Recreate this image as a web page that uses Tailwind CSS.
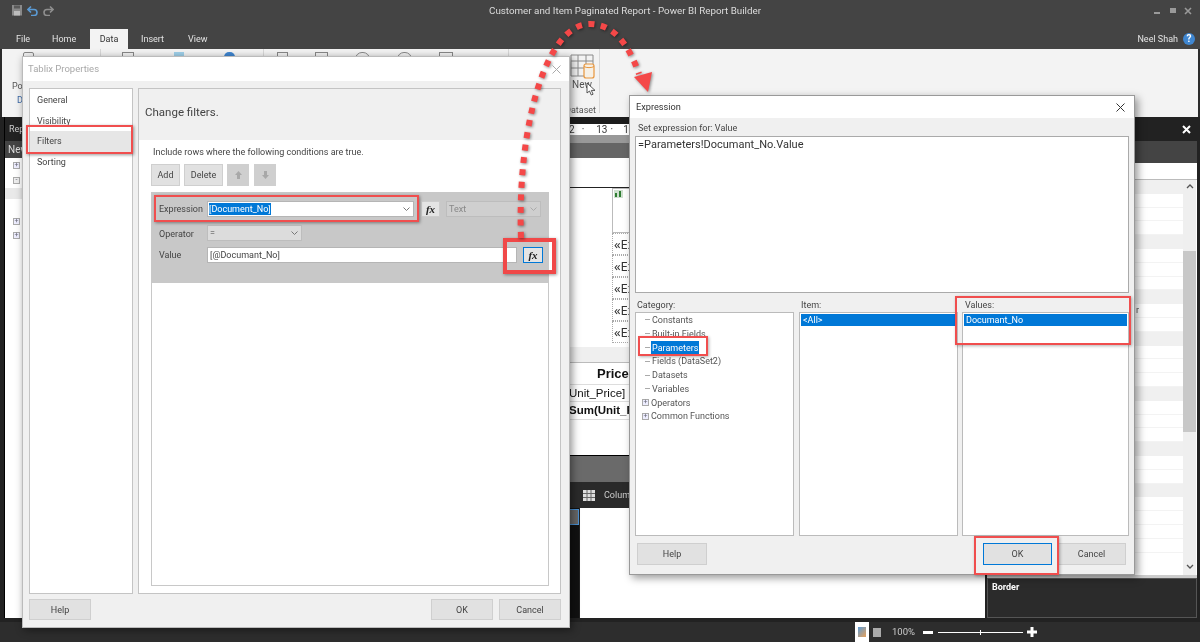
<!DOCTYPE html>
<html>
<head>
<meta charset="utf-8">
<script src="https://cdn.jsdelivr.net/npm/@tailwindcss/browser@4"></script>
</head>
<body class="bg-[#2b2b2b]">
<div class="relative w-[1200px] h-[642px] overflow-hidden flex flex-col bg-[#2b2b2b] font-['Roboto',sans-serif] text-[9px] leading-[14px] text-[#444] blur-[0.35px]">

  <!-- title bar -->
  <div class="h-[49px] shrink-0 bg-[#444444] flex flex-col text-[#e4e4e4]">
    <div class="h-[29px] flex items-start relative">
      <div class="flex items-center gap-[5px] pl-[12px] pt-[5px]">
        <svg width="10" height="11" viewBox="0 0 10 11"><rect width="10" height="10.5" fill="#8a8a8a"/><rect x="2" y="0.5" width="6" height="3" fill="#5a5a5a"/><rect x="2" y="6" width="6" height="4.5" fill="#bdbdbd"/></svg>
        <svg width="11" height="11" viewBox="0 0 11 11" fill="none" stroke="#5b9bd5" stroke-width="1.6"><path d="M1 4.5h6a3 3 0 0 1 0 6H4"/><path d="M4 1.5L1 4.5l3 3"/></svg>
        <svg width="11" height="11" viewBox="0 0 11 11" fill="none" stroke="#8f8f8f" stroke-width="1.6"><path d="M10 4.5H4a3 3 0 0 0 0 6h3"/><path d="M7 1.5l3 3-3 3"/></svg>
      </div>
      <div class="absolute left-[489px] top-[4px] text-[9.800px] text-[#dcdcdc] whitespace-nowrap">Customer and Item Paginated Report - Power BI Report Builder</div>
      <div class="ml-auto flex items-center gap-[8px] pr-[8px] pt-[7px]">
        <svg width="7" height="8" viewBox="0 0 7 8"><rect y="5" width="6" height="2" fill="#9a9a9a"/></svg>
        <svg width="7" height="8" viewBox="0 0 7 8"><rect x="1" y="1" width="6" height="5" fill="#9a9a9a"/></svg>
        <svg width="8" height="8" viewBox="0 0 8 8" stroke="#9a9a9a" stroke-width="1.6"><path d="M1 1l6 6M7 1L1 7"/></svg>
      </div>
    </div>
    <div class="h-[20px] flex items-center">
      <span class="ml-[16px] w-[36px]">File</span>
      <span class="w-[38px]">Home</span>
      <span class="w-[38px] h-[20px] bg-[#f3f3f3] text-[#333] flex items-center justify-center">Data</span>
      <span class="ml-[13px] w-[47px]">Insert</span>
      <span>View</span>
      <span class="ml-auto mr-[5px] flex items-center gap-[5px]">Neel Shah
        <span class="w-[12px] h-[12px] rounded-full bg-[#3f86d0] text-white text-[10px] leading-[12px] font-bold text-center">?</span>
      </span>
    </div>
  </div>

  <!-- ribbon -->
  <div class="h-[68px] shrink-0 mx-[2px] bg-[#f3f3f3] flex relative overflow-hidden">
    <div class="w-[99px] border-r border-[#d8d8d8] text-[#555] pt-[30px] pl-[10px]">Po<br><span class="pl-[5px] text-[#3c6aa8]">D</span>
      <span class="absolute left-[21px] top-[3px] w-[11px] h-[8px] border border-[#888] rounded-t-[2px]"></span>
    </div>
    <div class="w-[163px] border-r border-[#d8d8d8] h-[60px] flex gap-[40px] pl-[21px] pt-[3px]">
      <span class="w-[12px] h-[8px] border border-[#888]"></span>
      <span class="w-[10px] h-[6px] bg-[#9fd0ea]"></span>
      <span class="w-[11px] h-[6px] bg-[#3f86d0] rounded-t-[5px]"></span>
    </div>
    <div class="w-[245px] border-r border-[#d8d8d8] h-[60px] flex gap-[27px] pl-[13px] pt-[3px]">
      <span class="w-[11px] h-[8px] border border-[#888]"></span>
      <span class="w-[13px] h-[8px] border border-[#888]"></span>
      <span class="w-[15px] h-[8px] border border-[#888] rounded-t-[7px]"></span>
      <span class="w-[15px] h-[8px] border border-[#888] rounded-t-[7px]"></span>
      <span class="w-[14px] h-[8px] border border-[#888]"></span>
    </div>
    <div class="w-[91px] border-r border-[#d8d8d8] h-[64px] relative text-[#555]">
      <svg class="absolute left-[61px] top-[5px]" width="26" height="26" viewBox="0 0 26 26" fill="none"><path d="M1 1h22v21H1zM1 7h22M1 14h22M8 1v21M16 1v21" stroke="#8a8a8a" stroke-width="1"/><rect x="14" y="10" width="10" height="14" rx="2" fill="#f6f0e6" stroke="#e8963c" stroke-width="1.2"/><path d="M14 12.5c2 1.5 8 1.5 10 0" stroke="#e8963c"/></svg>
      <span class="absolute left-[63px] top-[29px] text-[10px]">New</span>
      <span class="absolute left-[56px] top-[54px]">Dataset</span>
      <svg class="absolute left-[77px] top-[33px]" width="10" height="14" viewBox="0 0 10 14"><path d="M1 1v10l2.500-2 1.800 4 1.800-.8-1.800-3.800H9z" fill="#fff" stroke="#444" stroke-width="0.9"/></svg>
    </div>
  </div>

  <!-- main -->
  <div class="flex-1 flex min-h-0 bg-[#222] text-[#ccc]">
    <!-- left pane -->
    <div class="ml-[4px] w-[561px] flex flex-col h-[501px] mt-0 border-l border-black">
      <div class="h-[24px] pl-[4px] flex items-center">Rep</div>
      <div class="h-[17px] bg-[#444] pl-[3px] text-[#ddd] text-[10px] flex items-center">New</div>
      <div class="flex-1 bg-white flex flex-col pt-[1px]">
        <div class="h-[13px] flex items-center pl-[8px]"><span class="w-[7px] h-[7px] border border-[#aaa] bg-[#eef] text-[#667] text-[7px] leading-[5px] text-center">+</span></div>
        <div class="h-[15px] mt-[1px] flex items-center pl-[8px]"><span class="w-[7px] h-[7px] border border-[#aaa] bg-[#eee] text-[#667] text-[7px] leading-[5px] text-center">-</span></div>
        <div class="h-[11px] bg-[#e9e9e9]"></div>
        <div class="h-[13px] mt-[16px] flex items-center pl-[8px]"><span class="w-[7px] h-[7px] border border-[#aaa] bg-[#eef] text-[#667] text-[7px] leading-[5px] text-center">+</span></div>
        <div class="h-[14px] flex items-center pl-[8px]"><span class="w-[7px] h-[7px] border border-[#aaa] bg-[#eef] text-[#667] text-[7px] leading-[5px] text-center">+</span></div>
      </div>
    </div>

    <!-- centre -->
    <div class="w-[420px] flex flex-col h-[501px] font-['Liberation_Sans',sans-serif]">
      <div class="h-[7px] bg-[#1c1c1c] shrink-0"></div>
      <div class="h-[11px] bg-white text-[#333] text-[10px] leading-[11px] flex shrink-0 pl-[4px] overflow-hidden font-['Roboto',sans-serif]"><span>2</span><span class="ml-[7px]">·</span><span class="ml-[12px]">13</span><span class="ml-[3px]">·</span><span class="ml-[10px]">14</span></div>
      <div class="h-[8px] bg-[#999] shrink-0"></div>
      <div class="h-[15px] bg-[#666] shrink-0"></div>
      <div class="h-[30px] bg-white border-b-[1px] border-[#222] shrink-0"></div>
      <div class="h-[159px] bg-white shrink-0 flex flex-col pl-[47px]">
        <div class="w-[30px] h-[45px] border border-[#bbb] p-[1px]"><svg width="9" height="8" viewBox="0 0 9 8"><rect width="9" height="8" fill="#cfe0cf"/><path d="M1 7V3h2v4zM5 7V1h2v6z" fill="#2f7d32"/></svg></div>
        <div class="w-[30px] h-[22px] border border-dotted border-[#aaa] text-[#333] text-[13px] leading-[20px] pl-[1px] font-['Noto_Sans',sans-serif]">«Ex</div>
        <div class="w-[30px] h-[22px] border border-dotted border-[#aaa] text-[#333] text-[13px] leading-[20px] pl-[1px] font-['Noto_Sans',sans-serif]">«Ex</div>
        <div class="w-[30px] h-[22px] border border-dotted border-[#aaa] text-[#333] text-[13px] leading-[20px] pl-[1px] font-['Noto_Sans',sans-serif]">«Ex</div>
        <div class="w-[30px] h-[22px] border border-dotted border-[#aaa] text-[#333] text-[13px] leading-[20px] pl-[1px] font-['Noto_Sans',sans-serif]">«Ex</div>
        <div class="w-[30px] h-[22px] border border-dotted border-[#aaa] text-[#333] text-[13px] leading-[20px] pl-[1px] font-['Noto_Sans',sans-serif]">«Ex</div>
      </div>
      <div class="h-[16px] bg-[#efefef] border-b border-[#bbb] shrink-0"></div>
      <div class="h-[22px] bg-white border-b border-[#ddd] text-[#111] font-bold text-[13px] leading-[21px] pl-[32px] shrink-0">Price</div>
      <div class="h-[17px] bg-white border-b border-[#ddd] text-[#111] text-[11.500px] leading-[16px] pl-[4px] shrink-0 whitespace-nowrap">Unit_Price]</div>
      <div class="h-[18px] bg-white border-b border-[#ddd] text-[#111] font-bold text-[11.500px] leading-[17px] pl-[4px] shrink-0 whitespace-nowrap overflow-hidden">Sum(Unit_Price)</div>
      <div class="h-[36px] bg-white shrink-0 border-b border-black"></div>
      <div class="h-[26px] bg-[#6a6a6a] shrink-0"></div>
      <div class="h-[26px] bg-[#2a2a2a] shrink-0 flex items-center pl-[18px] gap-[9px] font-['Roboto',sans-serif]">
        <svg width="12" height="11" viewBox="0 0 12 11"><rect width="12" height="11" fill="#ddd"/><path d="M0 3.500h12M0 7.500h12M4 0v11M8 0v11" stroke="#666"/></svg>
        <span class="text-[#ccc]">Column Groups</span>
      </div>
      <div class="flex-1 flex bg-[#111] min-h-0">
        <div class="w-[14px] pt-[1px]"><div class="h-[16px] bg-[#666] border border-[#4a8fd0]"></div></div>
        <div class="flex-1 bg-white border-l border-[#222]"></div>
      </div>
    </div>

    <!-- properties -->
    <div class="w-[210px] ml-[2px] flex flex-col h-[501px]">
      <div class="h-[24px] shrink-0 flex items-center justify-end pr-[6px]">
        <svg width="9" height="9" viewBox="0 0 9 9" stroke="#fff" stroke-width="2"><path d="M1 1l7 7M8 1L1 8"/></svg>
      </div>
      <div class="h-[22px] bg-[#444] shrink-0"></div>
      <div class="h-[17px] bg-white border-b border-[#bbb] shrink-0"></div>
      <div class="flex h-[395px] shrink-0 bg-white overflow-hidden">
        <div class="flex-1 flex flex-col text-[#555]">
          <div class="h-[13.8px] shrink-0 bg-[#f0f0f0]"></div><div class="h-[13.8px] shrink-0 border-b border-[#f3f3f3]"></div><div class="h-[13.8px] shrink-0 border-b border-[#f3f3f3]"></div><div class="h-[13.8px] shrink-0 border-b border-[#f3f3f3]"></div>
          <div class="h-[13.8px] shrink-0 bg-[#f0f0f0]"></div><div class="h-[13.8px] shrink-0 border-b border-[#f3f3f3]"></div><div class="h-[13.8px] shrink-0 border-b border-[#f3f3f3]"></div><div class="h-[13.8px] shrink-0 border-b border-[#f3f3f3]"></div>
          <div class="h-[13.8px] shrink-0 bg-[#f0f0f0]"></div><div class="h-[13.8px] shrink-0 border-b border-[#f3f3f3] pl-[149px] leading-[13px]">r</div><div class="h-[13.8px] shrink-0 border-b border-[#f3f3f3]"></div>
          <div class="h-[13.8px] shrink-0 bg-[#f0f0f0]"></div><div class="h-[13.8px] shrink-0 border-b border-[#f3f3f3]"></div><div class="h-[13.8px] shrink-0 border-b border-[#f3f3f3]"></div><div class="h-[13.8px] shrink-0 border-b border-[#f3f3f3]"></div>
          <div class="h-[13.8px] shrink-0 bg-[#f0f0f0]"></div><div class="h-[13.8px] shrink-0 border-b border-[#f3f3f3]"></div><div class="h-[13.8px] shrink-0 border-b border-[#f3f3f3]"></div><div class="h-[13.8px] shrink-0 border-b border-[#f3f3f3]"></div>
          <div class="h-[13.8px] shrink-0 bg-[#f0f0f0]"></div><div class="h-[13.8px] shrink-0 border-b border-[#f3f3f3]"></div><div class="h-[13.8px] shrink-0 border-b border-[#f3f3f3]"></div>
          <div class="h-[13.8px] shrink-0 bg-[#f0f0f0]"></div><div class="h-[13.8px] shrink-0 border-b border-[#f3f3f3]"></div><div class="h-[13.8px] shrink-0 border-b border-[#f3f3f3]"></div><div class="h-[13.8px] shrink-0 border-b border-[#f3f3f3]"></div><div class="h-[13.8px] shrink-0 border-b border-[#f3f3f3]"></div><div class="h-[13.8px] shrink-0"></div>
        </div>
        <div class="w-[13px] bg-[#efefef] flex flex-col items-center relative mr-[1px]">
          <svg class="mt-[3px]" width="8" height="6" viewBox="0 0 8 6" fill="none" stroke="#555" stroke-width="1.3"><path d="M1 5l3-3 3 3"/></svg>
          <div class="w-full h-[181px] bg-[#c8c8c8] mt-[62px]"></div>
          <svg class="mt-auto mb-[5px]" width="8" height="6" viewBox="0 0 8 6" fill="none" stroke="#555" stroke-width="1.3"><path d="M1 1l3 3 3-3"/></svg>
        </div>
      </div>
      <div class="h-[3px] shrink-0 bg-[#ccc]"></div>
      <div class="flex-1 bg-[#2b2b2b] border border-[#555] text-white font-bold pl-[4px] pt-[1px]">Border</div>
    </div>
  </div>

  <!-- status bar -->
  <div class="absolute left-0 right-0 bottom-0 h-[20px] bg-[#2d2d2d] flex items-center text-[#ccc]">
    <span class="ml-[855px] w-[14px] h-[20px] bg-white flex items-center justify-center"><span class="w-[8px] h-[10px] bg-[linear-gradient(135deg,#5b9bd5,#e8a15a)]"></span></span>
    <span class="ml-[4px] w-[8px] h-[9px] bg-[#aaa]"></span>
    <span class="ml-[11px] w-[31px] text-[9.500px]">100%</span>
    <span class="w-[10px] h-[3px] bg-white"></span>
    <span class="ml-[5px] w-[85px] h-[1px] bg-white relative"><span class="absolute left-[42px] -top-[2px] w-[1px] h-[5px] bg-white"></span></span>
    <svg class="ml-[4px]" width="10" height="10" viewBox="0 0 10 10" fill="#fff"><path d="M3.500 0h3v3.500H10v3H6.500V10h-3V6.500H0v-3h3.500z"/></svg>
  </div>

  <!-- Tablix Properties dialog -->
  <div class="absolute left-[22px] top-[56px] w-[548px] h-[572px] bg-[#f0f0f0] border border-[#bbb] shadow-[2px_2px_8px_rgba(0,0,0,0.45)] flex flex-col text-[#444]">
    <div class="h-[24px] shrink-0 bg-white flex items-center pl-[5px] text-[#a8a8a8] text-[9.500px]">Tablix Properties
      <svg class="ml-auto mr-[8px]" width="9" height="9" viewBox="0 0 9 9" stroke="#aaa" stroke-width="1"><path d="M0.500 0.500l8 8M8.500 0.500l-8 8"/></svg>
    </div>
    <div class="flex gap-[5px] pl-[6px] pt-[7px]">
      <div class="w-[104px] h-[506px] bg-white border border-[#c4c4c4] flex flex-col pt-[1px]">
        <div class="h-[20.600px] flex items-center pl-[7px]">General</div>
        <div class="h-[20.600px] flex items-center pl-[7px]">Visibility</div>
        <div class="h-[20.600px] flex items-center pl-[7px] bg-[#e6e6e6]">Filters</div>
        <div class="h-[20.600px] flex items-center pl-[7px]">Sorting</div>
      </div>
      <div class="w-[423px] h-[506px] bg-white border border-[#c4c4c4] flex flex-col">
        <div class="h-[51px] shrink-0 bg-[#f0f0f0] flex items-center pl-[6px] pb-[5px] text-[11.500px] text-[#444]">Change filters.</div>
        <div class="flex-1 flex flex-col pl-[12px] pr-[11px] pb-[7px] min-h-0">
          <div class="mt-[5px] h-[14px] pl-[2px]">Include rows where the following conditions are true.</div>
          <div class="mt-[5px] flex gap-[4px] h-[22px] shrink-0">
            <div class="w-[29px] bg-[#e1e1e1] border border-[#cfcfcf] flex items-center justify-center">Add</div>
            <div class="w-[39px] bg-[#e1e1e1] border border-[#cfcfcf] flex items-center justify-center">Delete</div>
            <div class="w-[22px] bg-[#cfcfcf] flex items-center justify-center"><svg width="7" height="8" viewBox="0 0 7 8" fill="#a8a8a8"><path d="M3.500 0L7 4H5v4H2V4H0z"/></svg></div>
            <div class="w-[22px] ml-[1px] bg-[#cfcfcf] flex items-center justify-center"><svg width="7" height="8" viewBox="0 0 7 8" fill="#a8a8a8"><path d="M3.500 8L7 4H5V0H2v4H0z"/></svg></div>
          </div>
          <div class="mt-[6px] flex-1 border border-[#c8c8c8] flex flex-col bg-white">
            <div class="h-[90px] shrink-0 bg-[#c8c8c8] flex flex-col pl-[7px] pt-[8px]">
              <div class="flex items-center h-[16px]">
                <span class="w-[48px]">Expression</span>
                <div class="w-[207px] h-[16px] bg-white border border-[#b5b5b5] flex items-center pl-[1px]"><span class="bg-[#0078d7] text-white leading-[12px]">[Document_No]</span>
                  <svg class="ml-auto mr-[3px]" width="7" height="5" viewBox="0 0 7 5" fill="none" stroke="#777"><path d="M0.500 0.500l3 3 3-3"/></svg></div>
                <div class="ml-[7px] w-[19px] h-[16px] bg-[#e4e4e4] border border-[#ccc] flex items-center justify-center font-['Liberation_Serif',serif] italic font-bold text-[11px] text-[#222]">fx</div>
                <div class="ml-[6px] w-[95px] h-[16px] bg-[#cfcfcf] border border-[#bdbdbd] flex items-center pl-[2px] text-[#888]">Text
                  <svg class="ml-auto mr-[3px]" width="7" height="5" viewBox="0 0 7 5" fill="none" stroke="#aaa"><path d="M0.500 0.500l3 3 3-3"/></svg></div>
              </div>
              <div class="flex items-center h-[16px] mt-[8px]">
                <span class="w-[48px] translate-y-[1px]">Operator</span>
                <div class="w-[95px] h-[16px] bg-[#dcdcdc] border border-[#bdbdbd] flex items-center pl-[2px]">=
                  <svg class="ml-auto mr-[3px]" width="7" height="5" viewBox="0 0 7 5" fill="none" stroke="#777"><path d="M0.500 0.500l3 3 3-3"/></svg></div>
              </div>
              <div class="flex items-center h-[16px] mt-[6px]">
                <span class="w-[48px]">Value</span>
                <div class="w-[310px] h-[16px] bg-white border border-[#b5b5b5] flex items-center pl-[2px]">[@Documant_No]</div>
                <div class="ml-[6px] w-[20px] h-[16px] bg-[#e4e4e4] border border-[#0078d7] flex items-center justify-center font-['Liberation_Serif',serif] italic font-bold text-[11px] text-[#222]">fx</div>
              </div>
            </div>
          </div>
        </div>
      </div>
    </div>
    <div class="flex pl-[6px] pr-[8px] mt-[5px] h-[21px]">
      <div class="w-[62px] bg-[#e1e1e1] border border-[#cfcfcf] flex items-center justify-center">Help</div>
      <div class="ml-auto w-[62px] bg-[#e1e1e1] border border-[#cfcfcf] flex items-center justify-center">OK</div>
      <div class="ml-[6px] w-[62px] bg-[#e1e1e1] border border-[#cfcfcf] flex items-center justify-center">Cancel</div>
    </div>
  </div>

  <!-- Expression dialog -->
  <div class="absolute left-[629px] top-[95px] w-[506px] h-[480px] bg-[#f0f0f0] border border-[#999] shadow-[3px_3px_8px_rgba(0,0,0,0.4)] flex flex-col text-[#444]">
    <div class="h-[22px] shrink-0 bg-white flex items-center pl-[6px] text-[9.200px] text-[#333]">Expression
      <svg class="ml-auto mr-[9px]" width="9" height="9" viewBox="0 0 9 9" stroke="#333" stroke-width="1"><path d="M0.500 0.500l8 8M8.500 0.500l-8 8"/></svg>
    </div>
    <div class="pl-[8px] mt-[3px] h-[14px]">Set expression for: Value</div>
    <div class="mx-[5px] mt-[1px] h-[157px] shrink-0 bg-white border border-[#aaa] pl-[2px] pt-[1px] text-[11px] text-[#333]">=Parameters!Documant_No.Value</div>
    <div class="flex px-[5px] mt-[5px] h-[238px]">
      <div class="w-[159px] flex flex-col">
        <div class="h-[14px] pl-[2px]">Category:</div>
        <div class="flex-1 bg-white border border-[#bbb] flex flex-col text-[#555]">
          <div class="h-[13.800px] flex items-center"><span class="ml-[9px] w-[5px] h-px bg-[#aaa]"></span><span class="ml-[2px]">Constants</span></div>
          <div class="h-[13.800px] flex items-center"><span class="ml-[9px] w-[5px] h-px bg-[#aaa]"></span><span class="ml-[2px]">Built-in Fields</span></div>
          <div class="h-[13.800px] flex items-center"><span class="ml-[9px] w-[5px] h-px bg-[#aaa]"></span><span class="ml-[1px] px-px bg-[#0078d7] text-white">Parameters</span></div>
          <div class="h-[13.800px] flex items-center"><span class="ml-[9px] w-[5px] h-px bg-[#aaa]"></span><span class="ml-[2px]">Fields (DataSet2)</span></div>
          <div class="h-[13.800px] flex items-center"><span class="ml-[9px] w-[5px] h-px bg-[#aaa]"></span><span class="ml-[2px]">Datasets</span></div>
          <div class="h-[13.800px] flex items-center"><span class="ml-[9px] w-[5px] h-px bg-[#aaa]"></span><span class="ml-[2px]">Variables</span></div>
          <div class="h-[13.800px] flex items-center"><span class="ml-[6px] w-[7px] h-[7px] border border-[#aaa] bg-[#eef] text-[#667] text-[7px] leading-[5px] text-center">+</span><span class="ml-[2px]">Operators</span></div>
          <div class="h-[13.800px] flex items-center"><span class="ml-[6px] w-[7px] h-[7px] border border-[#aaa] bg-[#eef] text-[#667] text-[7px] leading-[5px] text-center">+</span><span class="ml-[2px]">Common Functions</span></div>
        </div>
      </div>
      <div class="ml-[5px] w-[159px] flex flex-col">
        <div class="h-[14px] pl-[2px]">Item:</div>
        <div class="flex-1 bg-white border border-[#bbb] p-px">
          <div class="h-[12px] bg-[#0078d7] text-white leading-[12px] pl-[2px]">&lt;All&gt;</div>
        </div>
      </div>
      <div class="ml-[4px] w-[167px] flex flex-col">
        <div class="h-[14px] pl-[3px]">Values:</div>
        <div class="flex-1 bg-white border border-[#bbb] p-px">
          <div class="h-[12px] bg-[#0078d7] text-white leading-[12px] pl-[2px]">Documant_No</div>
        </div>
      </div>
    </div>
    <div class="flex px-[7px] pr-[8px] mt-[7px] h-[22px]">
      <div class="w-[70px] bg-[#e1e1e1] border border-[#cfcfcf] flex items-center justify-center">Help</div>
      <div class="ml-auto w-[69px] bg-[#e1e1e1] border border-[#0078d7] flex items-center justify-center">OK</div>
      <div class="ml-[5px] w-[69px] bg-[#e1e1e1] border border-[#cfcfcf] flex items-center justify-center">Cancel</div>
    </div>
  </div>

  <!-- red annotations -->
  <div class="absolute left-[26px] top-[125px] w-[107px] h-[29px] border-[2px] border-[#f04e4e] shadow-[1px_1px_3px_rgba(0,0,0,0.4)]"></div>
  <div class="absolute left-[154px] top-[195px] w-[265px] h-[27px] border-[2px] border-[#f04e4e] shadow-[1px_1px_3px_rgba(0,0,0,0.4)]"></div>
  <div class="absolute left-[503px] top-[238px] w-[53px] h-[36px] border-[4px] border-[#f04848] shadow-[1px_1px_3px_rgba(0,0,0,0.4)]"></div>
  <div class="absolute left-[638px] top-[336px] w-[70px] h-[20px] border-[2px] border-[#f04e4e] shadow-[1px_1px_3px_rgba(0,0,0,0.3)]"></div>
  <div class="absolute left-[955px] top-[296px] w-[176px] h-[49px] border-[2px] border-[#f04e4e] shadow-[1px_1px_3px_rgba(0,0,0,0.3)]"></div>
  <div class="absolute left-[974px] top-[536px] w-[85px] h-[39px] border-[2px] border-[#f04e4e] shadow-[1px_1px_3px_rgba(0,0,0,0.3)]"></div>

  <svg class="absolute left-0 top-0 pointer-events-none drop-shadow-[1px_1px_1.500px_rgba(0,0,0,0.45)]" width="1200" height="642" viewBox="0 0 1200 642" fill="none">
    <path d="M521 238C517 130 545 24 590 24C612 24 628 42 639 74" stroke="#f44848" stroke-width="6" stroke-dasharray="6 6.500"/>
    <path d="M634 77L652 72L648 92Z" fill="#f44848"/>
  </svg>
</div>
</body>
</html>
